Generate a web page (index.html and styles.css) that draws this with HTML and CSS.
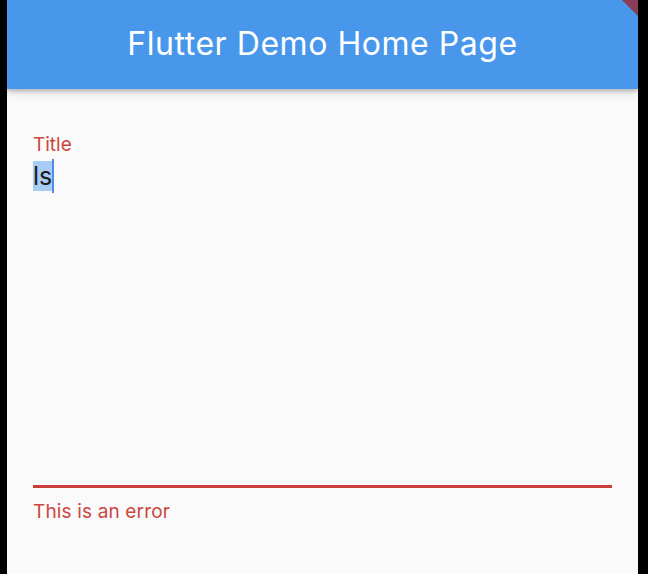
FILE: index.html
```html
<!DOCTYPE html>
<html lang="en">
<head>
<meta charset="utf-8">
<title>Flutter Demo Home Page</title>
<link rel="stylesheet" href="styles.css">
</head>
<body>
<div class="screen">
  <header class="appbar">
    <h1 class="appbar-title">Flutter Demo Home Page</h1>
  </header>
  <div class="debug-banner"></div>
  <main class="content">
    <div class="field">
      <label class="field-label">Title</label>
      <div class="field-input">
        <div class="input-row">
          <span class="input-text">ls</span><span class="cursor"></span>
        </div>
      </div>
      <div class="field-underline"></div>
      <div class="field-error">This is an error</div>
    </div>
  </main>
</div>
</body>
</html>
```

FILE: styles.css
```css
html, body {
  margin: 0;
  padding: 0;
  background: #000;
  height: 574px;
  overflow: hidden;
}

.screen {
  position: relative;
  margin: 0 10px 0 7px;
  height: 574px;
  background: #fafafa;
  overflow: hidden;
  font-family: Inter, Roboto, "Noto Sans", "Liberation Sans", sans-serif;
}

.appbar {
  position: relative;
  z-index: 1;
  height: 89px;
  background: #4897eb;
  display: flex;
  align-items: center;
  justify-content: center;
  box-shadow: 0 2px 4px rgba(0, 0, 0, 0.22), 0 4px 10px rgba(0, 0, 0, 0.12);
}

.appbar-title {
  margin: 0 0 2px 0;
  color: #fff;
  font-size: 32px;
  font-weight: 400;
  letter-spacing: 0.55px;
  line-height: 38px;
}

.debug-banner {
  position: absolute;
  z-index: 2;
  top: 0;
  right: 0;
  width: 16px;
  height: 16px;
  background: #8a3d57;
  clip-path: polygon(0 0, 100% 0, 100% 100%);
}

.content {
  padding: 44px 26px 0 26px;
}

.field {
  display: flex;
  flex-direction: column;
}

.field-label {
  font-size: 19px;
  line-height: 24px;
  color: #cc4641;
}

.field-input {
  height: 328px;
}

.input-row {
  margin-top: 2px;
  height: 34px;
  display: flex;
  align-items: center;
}

.input-text {
  font-size: 25px;
  color: #1d1d1d;
  background: #a8ccf3;
}

.cursor {
  width: 2px;
  height: 34px;
  background: #4a92e6;
}

.field-underline {
  height: 3px;
  background: #cb3e39;
}

.field-error {
  margin-top: 13px;
  font-size: 19px;
  letter-spacing: 0.15px;
  line-height: 22px;
  color: #cc4641;
}
```
